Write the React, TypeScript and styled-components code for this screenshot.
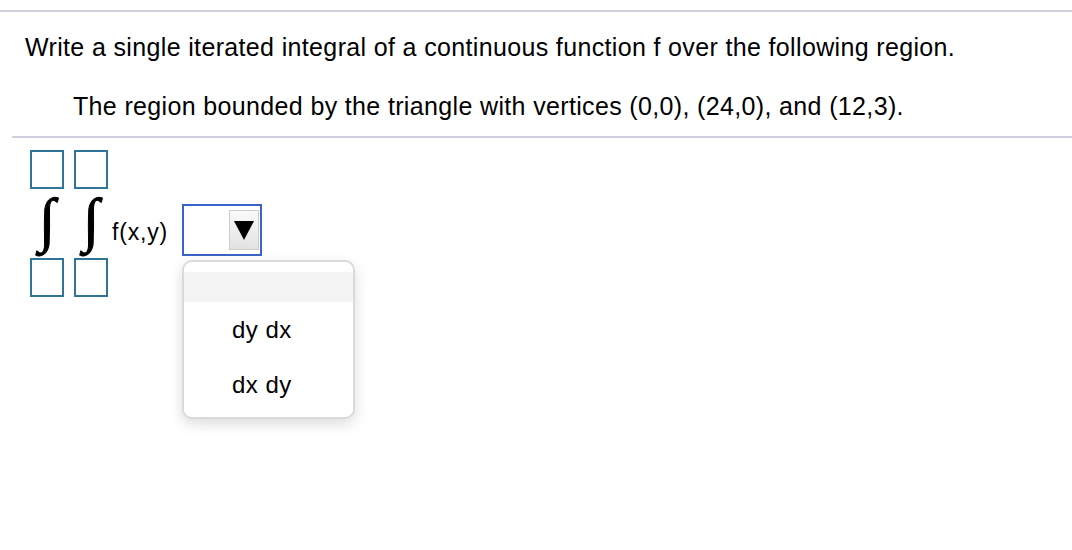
import React, { useState } from "react";
import styled, { createGlobalStyle } from "styled-components";

const GlobalStyle = createGlobalStyle`
  html, body {
    margin: 0;
    padding: 0;
    background: #fff;
  }
  body {
    font-family: "Liberation Sans", Arial, Helvetica, sans-serif;
    color: #000;
  }
`;

const Page = styled.div`
  width: 1072px;
  height: 550px;
  padding-top: 10px;
  box-sizing: border-box;
  overflow: hidden;
`;

const Rule = styled.div<{ inset?: number }>`
  height: 2px;
  background: #cdd0dc;
  margin-left: ${(props) => props.inset || 0}px;
`;

const Prompt = styled.p`
  margin: 20px 0 0 25px;
  font-size: 25px;
  line-height: 30px;
  letter-spacing: 0.35px;
`;

const Region = styled.p`
  margin: 29px 0 15px 73px;
  font-size: 25px;
  line-height: 30px;
  letter-spacing: 0.35px;
`;

const Answer = styled.div`
  display: flex;
  align-items: flex-start;
  padding: 12px 0 0 30px;
`;

const IntegralColumn = styled.div`
  display: flex;
  flex-direction: column;
  align-items: center;
  & + & {
    margin-left: 10px;
  }
`;

const LimitBox = styled.div`
  width: 34px;
  height: 39px;
  box-sizing: border-box;
  border: 2px solid #2f7597;
  background: #fff;
`;

const IntegralSign = styled.div`
  height: 69px;
  box-sizing: border-box;
  padding-bottom: 7px;
  display: flex;
  align-items: center;
  justify-content: center;
  font-family: "Liberation Serif", "Times New Roman", serif;
  font-weight: bold;
  font-size: 60px;
  line-height: 1;
  -webkit-text-stroke: 1px #000;
`;

const Integrand = styled.span`
  margin: 69px 14px 0 4px;
  font-size: 23px;
  line-height: 27px;
  letter-spacing: 0.8px;
`;

const SelectWrap = styled.div`
  position: relative;
  margin-top: 54px;
`;

const SelectBox = styled.div`
  width: 80px;
  height: 52px;
  box-sizing: border-box;
  border: 2px solid #3a63c7;
  background: #fff;
  display: flex;
  align-items: center;
  justify-content: flex-end;
  padding-right: 1px;
  cursor: pointer;
`;

const ArrowButton = styled.div`
  width: 30px;
  height: 40px;
  box-sizing: border-box;
  border: 1px solid #cbcbcb;
  background: linear-gradient(#fafafa, #e2e2e2);
  display: flex;
  align-items: center;
  justify-content: center;
`;

const Menu = styled.ul`
  position: absolute;
  top: 56px;
  left: 0;
  width: 173px;
  margin: 0;
  padding: 10px 0 5px;
  list-style: none;
  box-sizing: border-box;
  background: #fff;
  border: 2px solid #dadada;
  border-radius: 10px;
  box-shadow: 0 5px 14px rgba(0, 0, 0, 0.14);
`;

const MenuItem = styled.li<{ blank?: boolean }>`
  height: ${(props) => (props.blank ? 30 : 55)}px;
  line-height: ${(props) => (props.blank ? 30 : 55)}px;
  padding-left: 48px;
  font-size: 24px;
  letter-spacing: 0.5px;
  background: ${(props) => (props.blank ? "#f3f3f3" : "#fff")};
  cursor: pointer;
`;

const options = ["dy dx", "dx dy"];

const Integral = () => (
  <IntegralColumn>
    <LimitBox />
    <IntegralSign>∫</IntegralSign>
    <LimitBox />
  </IntegralColumn>
);

const App: React.FC = () => {
  const [open, setOpen] = useState(true);
  const [picked, setPicked] = useState<string | null>(null);

  return (
    <Page>
      <GlobalStyle />
      <Rule />
      <Prompt>
        Write a single iterated integral of a continuous function f over the following region.
      </Prompt>
      <Region>
        The region bounded by the triangle with vertices (0,0), (24,0), and (12,3).
      </Region>
      <Rule inset={12} />
      <Answer>
        <Integral />
        <Integral />
        <Integrand>f(x,y)</Integrand>
        <SelectWrap>
          <SelectBox onClick={() => setOpen(!open)}>
            {picked && <span>{picked}</span>}
            <ArrowButton>
              <svg width="20" height="20" viewBox="0 0 20 20">
                <path d="M0 1 L20 1 L10 20 Z" fill="#000" />
              </svg>
            </ArrowButton>
          </SelectBox>
          {open && (
            <Menu>
              <MenuItem blank onClick={() => setPicked(null)} />
              {options.map((option) => (
                <MenuItem
                  key={option}
                  onClick={() => {
                    setPicked(option);
                    setOpen(false);
                  }}
                >
                  {option}
                </MenuItem>
              ))}
            </Menu>
          )}
        </SelectWrap>
      </Answer>
    </Page>
  );
};

export default App;
